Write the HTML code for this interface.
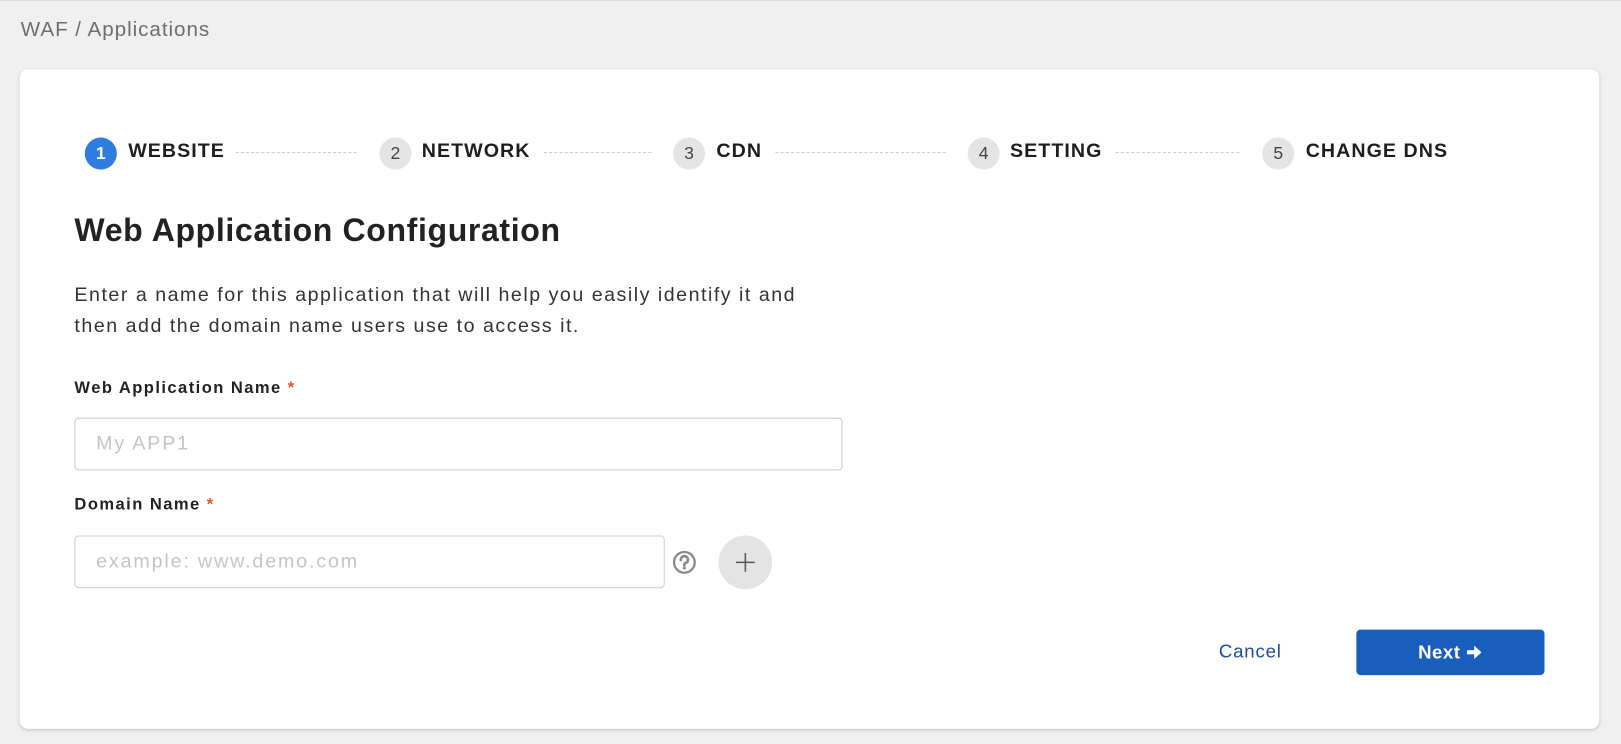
<!DOCTYPE html>
<html><head><style>
*{box-sizing:border-box;margin:0;padding:0}
body{width:1621px;height:744px;background:#f0f0f0;font-family:"Liberation Sans",sans-serif;position:relative;overflow:hidden}
#w{position:absolute;left:0;top:0;width:1568px;height:720px;transform:scale(1.0338);transform-origin:0 0;border-top:1px solid #ddd}
.a{position:absolute}
.crumb{left:20px;top:17px;font-size:20px;color:#6e6e6e;letter-spacing:.9px}
.card{left:19px;top:66px;width:1528px;height:638px;background:#fff;border-radius:8px;box-shadow:0 1px 3px rgba(0,0,0,.2)}
.c{width:31px;height:31px;border-radius:50%;background:#e4e4e4;color:#444;font-size:17px;text-align:center;line-height:31px;top:132px}
.c.on{background:#2f7de1;color:#fff;font-weight:bold}
.l{top:135px;font-size:19px;font-weight:bold;color:#1e1e1e;letter-spacing:1px}
.d{top:146px;border-top:1px dashed #ccc}
h1{position:absolute;left:72px;top:204px;font-size:31px;color:#222;letter-spacing:.6px}
p{position:absolute;left:72px;top:270px;font-size:19px;line-height:30px;color:#333;letter-spacing:1.45px}
.lab{font-size:16px;font-weight:bold;color:#222;letter-spacing:1.4px}
.lab span{color:#e4572e}
.in{border:1px solid #ccc;border-radius:4px;font-size:19px;color:#c4c4c4;padding-left:20px;line-height:49px;letter-spacing:1.8px}
</style></head><body><div id="w">
<div class="a crumb">WAF / Applications</div>
<div class="a card"></div>
<div class="a c on" style="left:82px">1</div><div class="a l" style="left:124px">WEBSITE</div><div class="a d" style="left:228px;width:117px"></div>
<div class="a c" style="left:367px">2</div><div class="a l" style="left:408px">NETWORK</div><div class="a d" style="left:526px;width:104px"></div>
<div class="a c" style="left:651px">3</div><div class="a l" style="left:693px">CDN</div><div class="a d" style="left:750px;width:165px"></div>
<div class="a c" style="left:936px">4</div><div class="a l" style="left:977px">SETTING</div><div class="a d" style="left:1079px;width:120px"></div>
<div class="a c" style="left:1221px">5</div><div class="a l" style="left:1263px">CHANGE DNS</div>
<h1>Web Application Configuration</h1>
<p>Enter a name for this application that will help you easily identify it and<br>then add the domain name users use to access it.</p>
<div class="a lab" style="left:72px;top:366px">Web Application Name <span>*</span></div>
<div class="a in" style="left:72px;top:403px;width:743px;height:51px">My APP1</div>
<div class="a lab" style="left:72px;top:479px">Domain Name <span>*</span></div>
<div class="a in" style="left:72px;top:517px;width:571px;height:51px">example: www.demo.com</div>
<svg class="a" style="left:650px;top:531px" width="24" height="24" viewBox="0 0 24 24"><circle cx="12" cy="12" r="10" fill="none" stroke="#888" stroke-width="2.2"/><path d="M8.5 9.5a3.5 3.5 0 1 1 4.5 3.3c-.7.3-1 .8-1 1.5v.7" fill="none" stroke="#888" stroke-width="2.6" stroke-linecap="round"/><circle cx="12" cy="17.6" r="1.4" fill="#888"/></svg>
<div class="a" style="left:695px;top:517px;width:52px;height:52px;border-radius:50%;background:#e4e4e4"></div>
<svg class="a" style="left:711px;top:533px" width="20" height="20"><path d="M10 1v18M1 10h18" stroke="#555" stroke-width="1.5"/></svg>
<div class="a" style="left:1179px;top:619px;font-size:18px;color:#1a4fa0;letter-spacing:.8px">Cancel</div>
<div class="a" style="left:1312px;top:608px;width:182px;height:44px;background:#1a5ebd;border-radius:4px;color:#fff;font-size:18px;font-weight:bold;text-align:center;line-height:44px;letter-spacing:.5px">Next <svg width="16" height="16" viewBox="0 0 16 16" style="vertical-align:-2px"><path d="M1 6h7V1.5L15 8l-7 6.5V10H1z" fill="#fff"/></svg></div>
</div></body></html>
